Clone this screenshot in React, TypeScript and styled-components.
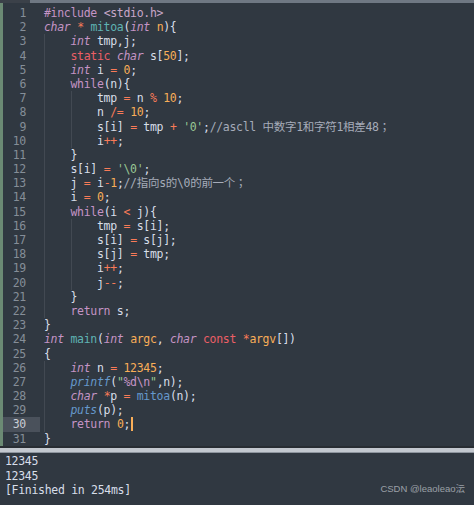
import React from "react";
import styled, { createGlobalStyle } from "styled-components";

const Global = createGlobalStyle`
  html, body { margin: 0; padding: 0; background: #303841; }
  #root { width: 474px; height: 505px; }
`;

const MONO = `"DejaVu Sans Mono", "Noto Sans CJK TC", monospace`;

const Window = styled.div`
  position: relative;
  width: 474px;
  height: 505px;
  overflow: hidden;
  background: #303841;
  display: flex;
  flex-direction: column;
  font-family: ${MONO};
  font-size: 11.5px;
  letter-spacing: -0.3px;
`;

const TopBar = styled.div`
  height: 3px;
  display: flex;
  flex-shrink: 0;
`;

const TopSeg = styled.div<{ $w?: number; $c: string }>`
  background: ${(p) => p.$c};
  ${(p) => (p.$w ? `width: ${p.$w}px;` : "flex: 1;")}
`;

const Editor = styled.div`
  display: flex;
  height: 443px;
  flex-shrink: 0;
`;

const LeftStrip = styled.div`
  width: 3px;
  background: #6b8a74;
  flex-shrink: 0;
`;

const Lines = styled.div`
  flex: 1;
  padding-top: 3px;
  display: flex;
  flex-direction: column;
`;

const Row = styled.div`
  display: flex;
  height: 14.2px;
  line-height: 14.2px;
  white-space: pre;
`;

const Num = styled.div<{ $active?: boolean }>`
  width: 37px;
  box-sizing: border-box;
  padding-right: 14px;
  text-align: right;
  color: ${(p) => (p.$active ? "#c8cdd4" : "#858e98")};
  background: ${(p) => (p.$active ? "#4a515b" : "transparent")};
  flex-shrink: 0;
`;

const Code = styled.div`
  padding-left: 4px;
  color: #d8dee9;
  display: flex;
  align-items: stretch;
`;

const Indent = styled.span`
  display: inline-block;
  width: 26.5px;
  height: 14.2px;
  box-shadow: inset 1px 0 0 rgba(255, 255, 255, 0.09);
`;

const COLORS: Record<string, { c: string; i?: boolean }> = {
  pl: { c: "#d8dee9" },
  pp: { c: "#c594c5" },
  inc: { c: "#c8a6c8" },
  st: { c: "#c594c5", i: true },
  kw: { c: "#c594c5" },
  op: { c: "#f97b58" },
  nu: { c: "#f9ae58" },
  pa: { c: "#f9ae58" },
  fn: { c: "#5fb3b3" },
  call: { c: "#6699cc" },
  fc: { c: "#6699cc", i: true },
  str: { c: "#99c794" },
  ph: { c: "#c594c5" },
  esc: { c: "#c594c5" },
  cm: { c: "#a6acb9" },
  md: { c: "#ec5f66" },
};

const Tok = styled.span<{ $c: string; $i?: boolean }>`
  color: ${(p) => p.$c};
  font-style: ${(p) => (p.$i ? "italic" : "normal")};
`;

const Cursor = styled.span`
  display: inline-block;
  width: 2px;
  height: 14px;
  margin-left: 1px;
  background: #f9ae58;
`;

const DividerDark = styled.div`
  height: 2px;
  background: #282d33;
  flex-shrink: 0;
`;

const DividerLight = styled.div`
  height: 4px;
  background: #c3c8cf;
  border-bottom: 1px solid #8e959e;
  flex-shrink: 0;
`;

const Output = styled.div`
  padding: 1px 5px 0;
  color: #d8dee9;
  line-height: 14.6px;
  white-space: pre;
`;

const Watermark = styled.div`
  position: absolute;
  right: 9px;
  bottom: 10px;
  font-family: "Liberation Sans", "Noto Sans CJK SC", sans-serif;
  font-size: 9.5px;
  letter-spacing: 0;
  color: rgba(225, 229, 235, 0.6);
`;

type T = [string, string];
type L = { ind: number; t: T[]; cursor?: boolean };

const lines: L[] = [
  { ind: 0, t: [["pp", "#include"], ["pl", " "], ["inc", "<stdio.h>"]] },
  { ind: 0, t: [["st", "char"], ["pl", " "], ["op", "*"], ["pl", " "], ["fn", "mitoa"], ["pl", "("], ["st", "int"], ["pl", " "], ["pa", "n"], ["pl", "){"]] },
  { ind: 1, t: [["st", "int"], ["pl", " tmp,j;"]] },
  { ind: 1, t: [["md", "static"], ["pl", " "], ["st", "char"], ["pl", " s["], ["nu", "50"], ["pl", "];"]] },
  { ind: 1, t: [["st", "int"], ["pl", " i "], ["op", "="], ["pl", " "], ["nu", "0"], ["pl", ";"]] },
  { ind: 1, t: [["kw", "while"], ["pl", "(n){"]] },
  { ind: 2, t: [["pl", "tmp "], ["op", "="], ["pl", " n "], ["op", "%"], ["pl", " "], ["nu", "10"], ["pl", ";"]] },
  { ind: 2, t: [["pl", "n "], ["op", "/="], ["pl", " "], ["nu", "10"], ["pl", ";"]] },
  { ind: 2, t: [["pl", "s[i] "], ["op", "="], ["pl", " tmp "], ["op", "+"], ["pl", " "], ["str", "'0'"], ["pl", ";"], ["cm", "//ascll 中数字1和字符1相差48；"]] },
  { ind: 2, t: [["pl", "i"], ["op", "++"], ["pl", ";"]] },
  { ind: 1, t: [["pl", "}"]] },
  { ind: 1, t: [["pl", "s[i] "], ["op", "="], ["pl", " "], ["str", "'\\0'"], ["pl", ";"]] },
  { ind: 1, t: [["pl", "j "], ["op", "="], ["pl", " i"], ["op", "-"], ["nu", "1"], ["pl", ";"], ["cm", "//指向s的\\0的前一个；"]] },
  { ind: 1, t: [["pl", "i "], ["op", "="], ["pl", " "], ["nu", "0"], ["pl", ";"]] },
  { ind: 1, t: [["kw", "while"], ["pl", "(i "], ["op", "<"], ["pl", " j){"]] },
  { ind: 2, t: [["pl", "tmp "], ["op", "="], ["pl", " s[i];"]] },
  { ind: 2, t: [["pl", "s[i] "], ["op", "="], ["pl", " s[j];"]] },
  { ind: 2, t: [["pl", "s[j] "], ["op", "="], ["pl", " tmp;"]] },
  { ind: 2, t: [["pl", "i"], ["op", "++"], ["pl", ";"]] },
  { ind: 2, t: [["pl", "j"], ["op", "--"], ["pl", ";"]] },
  { ind: 1, t: [["pl", "}"]] },
  { ind: 1, t: [["kw", "return"], ["pl", " s;"]] },
  { ind: 0, t: [["pl", "}"]] },
  { ind: 0, t: [["st", "int"], ["pl", " "], ["fn", "main"], ["pl", "("], ["st", "int"], ["pl", " "], ["pa", "argc"], ["pl", ", "], ["st", "char"], ["pl", " "], ["md", "const"], ["pl", " "], ["op", "*"], ["pa", "argv"], ["pl", "[])"]] },
  { ind: 0, t: [["pl", "{"]] },
  { ind: 1, t: [["st", "int"], ["pl", " n "], ["op", "="], ["pl", " "], ["nu", "12345"], ["pl", ";"]] },
  { ind: 1, t: [["fc", "printf"], ["pl", "("], ["str", "\""], ["ph", "%d"], ["esc", "\\n"], ["str", "\""], ["pl", ",n);"]] },
  { ind: 1, t: [["st", "char"], ["pl", " "], ["op", "*"], ["pl", "p "], ["op", "="], ["pl", " "], ["call", "mitoa"], ["pl", "(n);"]] },
  { ind: 1, t: [["fc", "puts"], ["pl", "(p);"]] },
  { ind: 1, t: [["kw", "return"], ["pl", " "], ["nu", "0"], ["pl", ";"]], cursor: true },
  { ind: 0, t: [["pl", "}"]] },
];

const output = ["12345", "12345", "[Finished in 254ms]"];

export default function App() {
  return (
    <>
      <Global />
      <Window>
        <TopBar>
          <TopSeg $w={30} $c="#3b4149" />
          <TopSeg $c="#6f7883" />
        </TopBar>
        <Editor>
          <LeftStrip />
          <Lines>
            {lines.map((l, i) => (
              <Row key={i}>
                <Num $active={i === 29}>{i + 1}</Num>
                <Code>
                  {Array.from({ length: l.ind }).map((_, k) => (
                    <Indent key={k} />
                  ))}
                  <span>
                    {l.t.map(([type, text], k) => (
                      <Tok key={k} $c={COLORS[type].c} $i={COLORS[type].i}>
                        {text}
                      </Tok>
                    ))}
                  </span>
                  {l.cursor && <Cursor />}
                </Code>
              </Row>
            ))}
          </Lines>
        </Editor>
        <DividerDark />
        <DividerLight />
        <Output>
          {output.map((o, i) => (
            <div key={i}>{o}</div>
          ))}
        </Output>
        <Watermark>CSDN @leaoleao沄</Watermark>
      </Window>
    </>
  );
}
